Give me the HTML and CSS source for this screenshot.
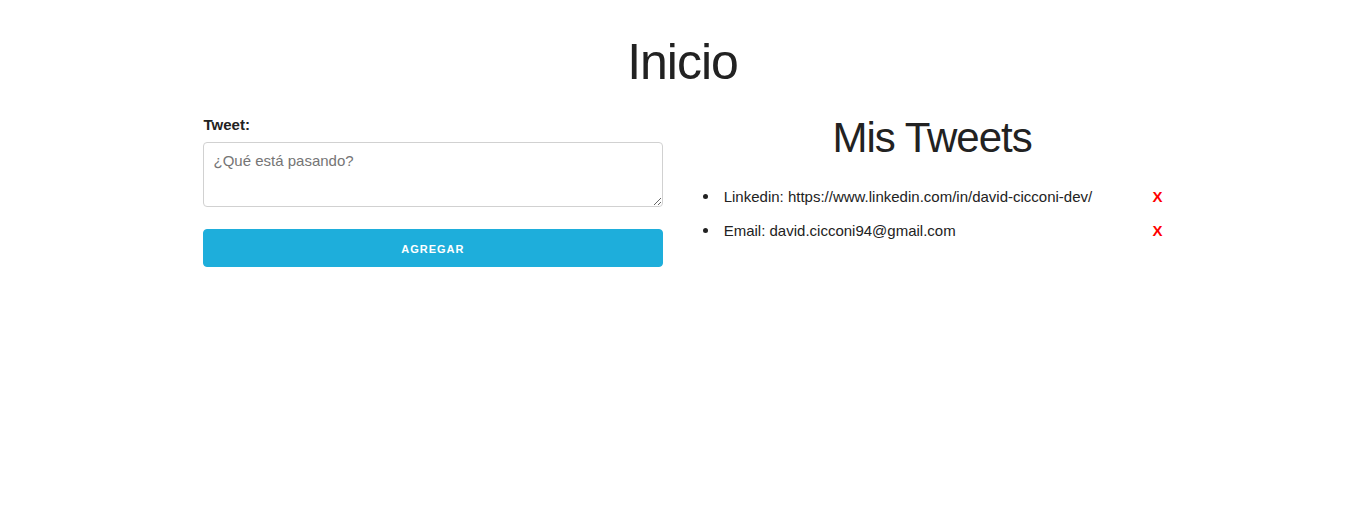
FILE: index.html
```html
<!DOCTYPE html>
<html lang="es">
<head>
<meta charset="utf-8">
<title>Inicio</title>
<link rel="stylesheet" href="styles.css">
</head>
<body>
  <div class="container">
    <h1 class="title">Inicio</h1>
    <div class="row">
      <div class="col form-col">
        <label class="label" for="tweet">Tweet:</label>
        <textarea id="tweet" class="textarea" placeholder="¿Qué está pasando?"></textarea>
        <button class="btn-primary" type="button"><span class="btn-label">Agregar</span></button>
      </div>
      <div class="col list-col">
        <h2 class="subtitle">Mis Tweets</h2>
        <ul class="tweets">
          <li class="tweet"><span class="bullet"></span><span class="tweet-text">Linkedin: https://www.linkedin.com/in/david-cicconi-dev/</span><a class="delete">X</a></li>
          <li class="tweet"><span class="bullet"></span><span class="tweet-text">Email: david.cicconi94@gmail.com</span><a class="delete">X</a></li>
        </ul>
      </div>
    </div>
  </div>
</body>
</html>
```

FILE: styles.css
```css
* { box-sizing: border-box; }
html, body { margin: 0; padding: 0; background: #fff; }
body {
  font-family: "Liberation Sans", Arial, sans-serif;
  font-size: 15px;
  line-height: 24px;
  color: #222;
}
.container {
  width: 960px;
  margin: 0 auto;
  padding-top: 32px;
}
.title {
  margin: 0 0 20px;
  font-size: 50px;
  line-height: 60px;
  font-weight: 400;
  letter-spacing: -1px;
  text-align: center;
}
.row {
  display: flex;
  gap: 38.4px;
}
.col {
  width: 460.8px;
  flex: none;
}
.form-col {
  display: flex;
  flex-direction: column;
  padding-top: 1px;
}
.label {
  display: block;
  font-weight: 700;
  margin: 0 0 5px 1px;
}
.textarea {
  display: block;
  width: 100%;
  height: 65px;
  min-height: 65px;
  padding: 6px 10px;
  border: 1px solid #d1d1d1;
  border-radius: 4px;
  font-family: "Liberation Sans", Arial, sans-serif;
  font-size: 15px;
  line-height: 24px;
  color: #222;
  margin: 0 0 22px;
  background: #fff;
}
.textarea::placeholder { color: #757575; }
.btn-primary {
  display: block;
  width: 100%;
  height: 38px;
  padding: 0 30px;
  border: 1px solid #1eaedb;
  border-radius: 4px;
  background: #1eaedb;
  color: #fff;
  font-family: "Liberation Sans", Arial, sans-serif;
  font-size: 11px;
  font-weight: 700;
  letter-spacing: 1px;
  text-transform: uppercase;
  line-height: 36px;
  cursor: pointer;
}
.btn-label {
  display: block;
  padding-top: 1px;
  line-height: 36px;
}
.subtitle {
  margin: 0 0 20px;
  font-size: 42px;
  line-height: 52.5px;
  font-weight: 400;
  letter-spacing: -1px;
  text-align: center;
}
.tweets {
  list-style: none;
  margin: 0;
  padding: 0;
}
.tweet {
  display: flex;
  align-items: center;
  margin-bottom: 10px;
}
.bullet {
  width: 5px;
  height: 5px;
  border-radius: 50%;
  background: #222;
  margin: 0 16px 0 1px;
  flex: none;
}
.tweet-text { flex: 1; }
.delete {
  color: #f00;
  font-weight: 700;
  margin-left: auto;
  cursor: pointer;
}
```
